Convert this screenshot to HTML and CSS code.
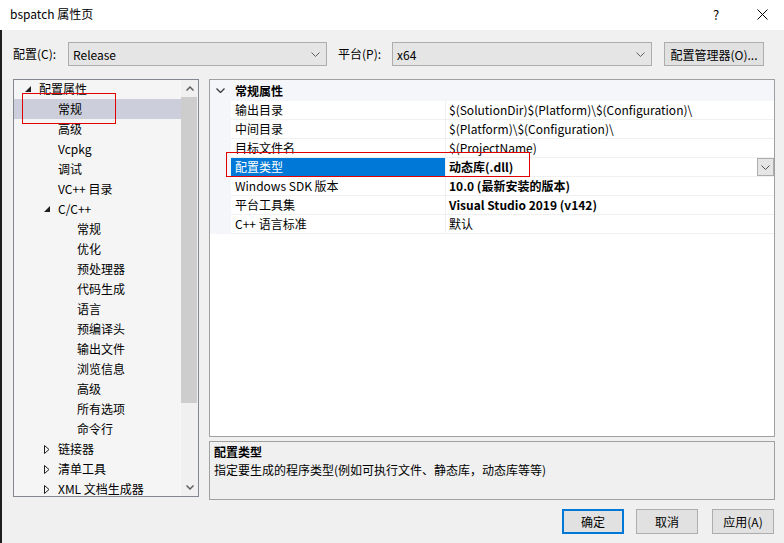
FILE: index.html
```html
<!DOCTYPE html>
<html lang="zh-CN">
<head>
    <meta charset="UTF-8">
    <title>bspatch 属性页</title>
    <link rel="stylesheet" href="styles.css">
</head>
<body>
<div class="dialog">
    <div class="titlebar">
        <span class="title">bspatch 属性页</span>
        <span class="title-btn help">?</span>
        <span class="title-btn close">
            <svg width="11" height="11" viewBox="0 0 11 11"><path d="M0.5 0.5 L10.5 10.5 M10.5 0.5 L0.5 10.5" stroke="#000" stroke-width="1" fill="none"/></svg>
        </span>
    </div>

    <div class="content">
        <!-- 配置 / 平台 -->
        <div class="toolbar">
            <span class="tb-label">配置(C):</span>
            <div class="combo combo-config">
                <span>Release</span>
                <svg width="9" height="5" viewBox="0 0 9 5"><polyline points="0.5,0.5 4.5,4.5 8.5,0.5" stroke="#606060" fill="none"/></svg>
            </div>
            <span class="tb-label tb-platform">平台(P):</span>
            <div class="combo combo-platform">
                <span>x64</span>
                <svg width="9" height="5" viewBox="0 0 9 5"><polyline points="0.5,0.5 4.5,4.5 8.5,0.5" stroke="#606060" fill="none"/></svg>
            </div>
            <button class="btn btn-manager">配置管理器(O)...</button>
        </div>

        <div class="main">
            <!-- 左侧树 -->
            <div class="tree">
                <ul class="tree-list" id="treeList"></ul>
                <div class="scrollbar">
                    <div class="sb-arrow">
                        <svg width="8" height="5" viewBox="0 0 8 5"><polyline points="0.5,4.5 4,1 7.5,4.5" stroke="#606060" stroke-width="1.5" fill="none"/></svg>
                    </div>
                    <div class="sb-track"><div class="sb-thumb"></div></div>
                    <div class="sb-arrow">
                        <svg width="8" height="5" viewBox="0 0 8 5"><polyline points="0.5,0.5 4,4 7.5,0.5" stroke="#606060" stroke-width="1.5" fill="none"/></svg>
                    </div>
                </div>
            </div>

            <!-- 右侧属性表 -->
            <div class="right">
                <div class="grid">
                    <div class="grid-header">
                        <span class="gutter">
                            <svg width="9" height="5" viewBox="0 0 9 5"><polyline points="0.5,0.5 4.5,4.5 8.5,0.5" stroke="#404040" stroke-width="1.4" fill="none"/></svg>
                        </span>
                        <span class="group-name">常规属性</span>
                    </div>
                    <div id="propRows"></div>
                </div>
                <div class="desc">
                    <div class="desc-title">配置类型</div>
                    <div class="desc-text">指定要生成的程序类型(例如可执行文件、静态库，动态库等等)</div>
                </div>
            </div>
        </div>

        <div class="footer">
            <button class="btn btn-ok">确定</button>
            <button class="btn">取消</button>
            <button class="btn btn-apply">应用(A)</button>
        </div>
    </div>

    <!-- 标注框 -->
    <div class="mark mark-tree"></div>
    <div class="mark mark-prop"></div>
</div>

<script>
// 树节点: [层级, 文本, 展开状态(open/closed/null), 选中]
const treeItems = [
    [0, '配置属性', 'open'],
    [1, '常规', null, true],
    [1, '高级'],
    [1, 'Vcpkg'],
    [1, '调试'],
    [1, 'VC++ 目录'],
    [1, 'C/C++', 'open'],
    [2, '常规'],
    [2, '优化'],
    [2, '预处理器'],
    [2, '代码生成'],
    [2, '语言'],
    [2, '预编译头'],
    [2, '输出文件'],
    [2, '浏览信息'],
    [2, '高级'],
    [2, '所有选项'],
    [2, '命令行'],
    [1, '链接器', 'closed'],
    [1, '清单工具', 'closed'],
    [1, 'XML 文档生成器', 'closed']
];

const openIcon = '<svg width="6" height="6" viewBox="0 0 6 6"><polygon points="6,0 6,6 0,6" fill="#1e1e1e"/></svg>';
const closedIcon = '<svg width="6" height="9" viewBox="0 0 6 9"><polygon points="0.5,0.5 5,4.5 0.5,8.5" fill="none" stroke="#1e1e1e"/></svg>';

document.getElementById('treeList').innerHTML = treeItems.map(([level, text, state, selected]) => {
    let icon = state === 'open' ? openIcon : state === 'closed' ? closedIcon : '';
    return `<li class="tree-item level-${level}${selected ? ' selected' : ''}">
        <span class="expander">${icon}</span><span>${text}</span>
    </li>`;
}).join('');

// 属性行: [名称, 值, 粗体, 选中]
const props = [
    ['输出目录', '$(SolutionDir)$(Platform)\\$(Configuration)\\'],
    ['中间目录', '$(Platform)\\$(Configuration)\\'],
    ['目标文件名', '$(ProjectName)'],
    ['配置类型', '动态库(.dll)', true, true],
    ['Windows SDK 版本', '10.0 (最新安装的版本)', true],
    ['平台工具集', 'Visual Studio 2019 (v142)', true],
    ['C++ 语言标准', '默认']
];

const dropBtn = '<span class="drop-btn"><svg width="9" height="5" viewBox="0 0 9 5"><polyline points="0.5,0.5 4.5,4.5 8.5,0.5" stroke="#505050" fill="none"/></svg></span>';

document.getElementById('propRows').innerHTML = props.map(([name, value, bold, selected]) => `
    <div class="prop-row${selected ? ' selected' : ''}">
        <span class="gutter"></span>
        <span class="prop-name">${name}</span>
        <span class="prop-value${bold ? ' bold' : ''}"><span>${value}</span>${selected ? dropBtn : ''}</span>
    </div>
`).join('');
</script>
</body>
</html>
```

FILE: styles.css
```css
* {
    box-sizing: border-box;
}

body {
    margin: 0;
    font-family: "Segoe UI", "Noto Sans CJK SC", sans-serif;
    font-size: 12px;
    color: #000;
    background: #fff;
}

.dialog {
    position: relative;
    width: 784px;
    height: 543px;
    overflow: hidden;
    display: flex;
    flex-direction: column;
}

/* 标题栏 */
.titlebar {
    height: 30px;
    flex: none;
    background: #fff;
    display: flex;
    align-items: center;
    padding-left: 10px;
}

.title {
    flex: 1;
    line-height: 16px;
    padding-bottom: 2px;
}

.title-btn {
    display: flex;
    align-items: center;
    justify-content: center;
    padding-bottom: 2px;
}

.help {
    font-size: 13px;
    width: 12px;
    margin-right: 35px;
}

.close {
    margin-right: 16px;
}

/* 主体 */
.content {
    flex: 1;
    background: #f0f0f0;
    border-left: 2px solid #1d1d1d;
    padding: 12px 0 0 11px;
}

.toolbar {
    display: flex;
    align-items: center;
    height: 24px;
}

.tb-label {
    width: 55px;
    line-height: 16px;
}

.tb-platform {
    width: 54px;
    margin-left: 11px;
}

.combo {
    height: 24px;
    background: #e5e5e5;
    border: 1px solid #adadad;
    display: flex;
    align-items: center;
    justify-content: space-between;
    padding: 0 6px 0 4px;
}

.combo-config {
    width: 259px;
}

.combo-platform {
    width: 260px;
}

.btn {
    font: inherit;
    color: #000;
    background: #e1e1e1;
    border: 1px solid #adadad;
    height: 25px;
    padding: 0;
    width: 62px;
}

.btn-manager {
    width: 100px;
    height: 24px;
    margin-left: 12px;
}

.main {
    display: flex;
    align-items: flex-start;
    margin-top: 13px;
}

/* 左侧树 */
.tree {
    width: 186px;
    height: 418px;
    border: 1px solid #828790;
    background: #f5f5f5;
    display: flex;
}

.tree-list {
    flex: 1;
    list-style: none;
    margin: 0;
    padding: 0;
    overflow: hidden;
}

.tree-item {
    height: 20px;
    display: flex;
    align-items: center;
    white-space: nowrap;
    line-height: 16px;
}

.tree-item:first-child {
    margin-top: -1px;
}

.tree-item.selected {
    background: #cccedb;
}

.expander {
    width: 14px;
    flex: none;
    display: flex;
    align-items: center;
}

.level-0 { padding-left: 11px; }
.level-1 { padding-left: 30px; }
.level-2 { padding-left: 49px; }

.scrollbar {
    width: 17px;
    flex: none;
    background: #f0f0f0;
    display: flex;
    flex-direction: column;
}

.sb-arrow {
    height: 17px;
    display: flex;
    align-items: center;
    justify-content: center;
}

.sb-track {
    flex: 1;
}

.sb-thumb {
    height: 306px;
    margin-right: 1px;
    background: #cdcdcd;
}

/* 右侧 */
.right {
    width: 566px;
    margin-left: 10px;
    display: flex;
    flex-direction: column;
    gap: 4px;
}

.grid {
    height: 358px;
    background: #fff;
    border: 1px solid #a0a0a0;
}

.grid-header {
    height: 21px;
    display: flex;
    align-items: center;
    background: #f5f6f9;
}

.gutter {
    width: 21px;
    align-self: stretch;
    flex: none;
    display: flex;
    align-items: center;
    justify-content: center;
    background: #f5f6f9;
}

.group-name {
    font-weight: bold;
    padding-left: 4px;
    line-height: 16px;
}

.prop-row {
    height: 19px;
    display: flex;
}

.prop-name,
.prop-value {
    border-bottom: 1px solid #f0f0f0;
    display: flex;
    align-items: center;
    line-height: 16px;
    white-space: nowrap;
    overflow: hidden;
}

.prop-name {
    width: 215px;
    padding-left: 4px;
    border-right: 1px solid #f0f0f0;
}

.prop-value {
    flex: 1;
    padding-left: 3px;
}

.prop-value.bold {
    font-weight: bold;
}

.prop-row.selected .prop-name {
    background: #0078d7;
    color: #fff;
}

.drop-btn {
    margin-left: auto;
    width: 17px;
    height: 18px;
    background: #e5e5e5;
    border: 1px solid #adadad;
    display: flex;
    align-items: center;
    justify-content: center;
}

.desc {
    height: 59px;
    border: 1px solid #a0a0a0;
    padding: 1px 4px;
    line-height: 18px;
}

.desc-title {
    font-weight: bold;
}

.footer {
    display: flex;
    justify-content: flex-end;
    gap: 12px;
    margin-top: 9px;
    padding-right: 10px;
}

.btn-ok {
    border: 2px solid #0078d7;
}

.btn-apply {
    margin-left: 2px;
}

/* 红色标注框 */
.mark {
    position: absolute;
    border: 1px solid #e00000;
}

.mark-tree {
    left: 22px;
    top: 93px;
    width: 94px;
    height: 31px;
}

.mark-prop {
    left: 226px;
    top: 152px;
    width: 304px;
    height: 25px;
}
```
